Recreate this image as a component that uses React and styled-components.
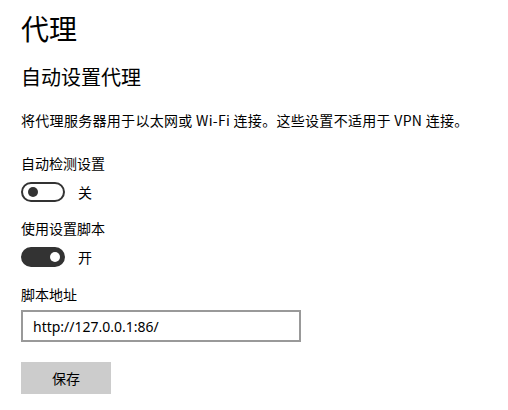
import React, { useState } from 'react';
import styled, { createGlobalStyle } from 'styled-components';

const GlobalStyle = createGlobalStyle`
	html, body {
		margin: 0;
		padding: 0;
		background: #ffffff;
	}
	body {
		font-family: "Noto Sans CJK SC", "Noto Sans", sans-serif;
		color: #000000;
	}
`;

const Page = styled.div`
	display: flex;
	flex-direction: column;
	align-items: flex-start;
	padding: 10px 21px 0;
	box-sizing: border-box;
	width: 508px;
	height: 410px;
`;

const Title = styled.h1`
	margin: 0;
	font-size: 28px;
	line-height: 36px;
	font-weight: 400;
`;

const SubTitle = styled.h2`
	margin: 17px 0 0;
	font-size: 20px;
	line-height: 28px;
	font-weight: 400;
`;

const Description = styled.p`
	margin: 19px 0 0;
	font-size: 14px;
	line-height: 20px;
	letter-spacing: 0.3px;
`;

const Label = styled.div`
	margin-top: ${({ gap }) => gap}px;
	font-size: 14px;
	line-height: 20px;
`;

const ToggleRow = styled.label`
	display: flex;
	align-items: center;
	gap: 13px;
	margin-top: 9px;
	height: 20px;
	font-size: 14px;
	cursor: pointer;
`;

const Track = styled.span`
	position: relative;
	display: block;
	width: 44px;
	height: 20px;
	box-sizing: border-box;
	border-radius: 10px;
	border: 2px solid #333333;
	background: ${({ on }) => (on ? '#333333' : '#ffffff')};
`;

const Knob = styled.span`
	position: absolute;
	top: 3px;
	left: ${({ on }) => (on ? '27px' : '5px')};
	width: 10px;
	height: 10px;
	border-radius: 50%;
	background: ${({ on }) => (on ? '#ffffff' : '#333333')};
`;

const Input = styled.input`
	margin-top: 6px;
	width: 280px;
	height: 32px;
	box-sizing: border-box;
	border: 2px solid #999999;
	padding: 0 10px;
	font-family: "Noto Sans", "Noto Sans CJK SC", sans-serif;
	font-size: 14px;
	color: #000000;
	outline: none;
`;

const Button = styled.button`
	margin-top: 20px;
	width: 90px;
	height: 32px;
	border: none;
	background: #cccccc;
	font-family: "Noto Sans CJK SC", sans-serif;
	font-size: 14px;
	color: #000000;
	padding: 0;
`;

const Toggle = ({ on, onChange }) => (
	<ToggleRow onClick={onChange}>
		<Track on={on}>
			<Knob on={on} />
		</Track>
		<span>{on ? '开' : '关'}</span>
	</ToggleRow>
);

const App = () => {
	const [autoDetect, setAutoDetect] = useState(false);
	const [useScript, setUseScript] = useState(true);
	const [address, setAddress] = useState('http://127.0.0.1:86/');

	return (
		<>
			<GlobalStyle />
			<Page>
				<Title>代理</Title>
				<SubTitle>自动设置代理</SubTitle>
				<Description>
					将代理服务器用于以太网或 Wi-Fi 连接。这些设置不适用于 VPN 连接。
				</Description>
				<Label gap={23}>自动检测设置</Label>
				<Toggle on={autoDetect} onChange={() => setAutoDetect((v) => !v)} />
				<Label gap={16}>使用设置脚本</Label>
				<Toggle on={useScript} onChange={() => setUseScript((v) => !v)} />
				<Label gap={17}>脚本地址</Label>
				<Input value={address} onChange={(e) => setAddress(e.target.value)} />
				<Button>保存</Button>
			</Page>
		</>
	);
};

export default App;
